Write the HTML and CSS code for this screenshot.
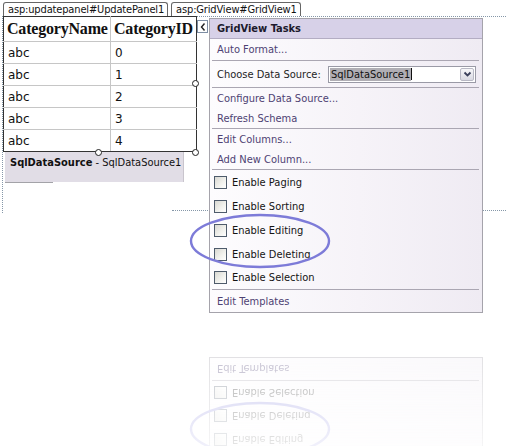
FILE: index.html
```html
<!DOCTYPE html>
<html>
<head>
<meta charset="utf-8">
<link rel="stylesheet" href="styles.css">
</head>
<body>
<div class="page">
  <div class="tabs">
    <span class="tab">asp:updatepanel#UpdatePanel1</span>
    <span class="tab">asp:GridView#GridView1</span>
  </div>
  <div class="updatepanel">
    <div class="gridwrap">
      <table class="grid">
        <colgroup><col class="c1"><col class="c2"></colgroup>
        <tr><th>CategoryName</th><th>CategoryID</th></tr>
        <tr><td>abc</td><td>0</td></tr>
        <tr><td>abc</td><td>1</td></tr>
        <tr><td>abc</td><td>2</td></tr>
        <tr><td>abc</td><td>3</td></tr>
        <tr><td>abc</td><td>4</td></tr>
      </table>
      <span class="handle h-right"></span>
      <span class="handle h-bottom"></span>
      <span class="handle h-corner"></span>
    </div>
    <div class="sqlds"><b>SqlDataSource</b> - SqlDataSource1</div>
    <div class="sqlds-shadow"></div>
  </div>

  <div class="smarttag"><svg width="8" height="10" viewBox="0 0 8 10"><polyline points="5.5,1.5 2.5,5 5.5,8.5" fill="none" stroke="#222" stroke-width="1.4"/></svg></div>

  <div class="tasks">
    <div class="tasks-head">GridView Tasks</div>
    <div class="row link r-auto">Auto Format...</div>
    <div class="sep"></div>
    <div class="row r-choose">
      <span class="lbl">Choose Data Source:</span>
      <div class="select">
        <span class="sel-text">SqlDataSource1</span><span class="caret"></span>
        <span class="sel-btn"><svg width="9" height="7" viewBox="0 0 9 7"><polyline points="1.5,1.5 4.5,4.5 7.5,1.5" fill="none" stroke="#3a3f5a" stroke-width="1.8"/></svg></span>
      </div>
    </div>
    <div class="sep"></div>
    <div class="row link r-20">Configure Data Source...</div>
    <div class="row link r-20">Refresh Schema</div>
    <div class="sep"></div>
    <div class="row link r-20">Edit Columns...</div>
    <div class="row link r-20">Add New Column...</div>
    <div class="sep"></div>
    <div class="row check r-24"><span class="box"></span>Enable Paging</div>
    <div class="row check r-24"><span class="box"></span>Enable Sorting</div>
    <div class="row check r-24"><span class="box"></span>Enable Editing</div>
    <div class="row check r-24"><span class="box"></span>Enable Deleting</div>
    <div class="row check r-23"><span class="box"></span>Enable Selection</div>
    <div class="sep"></div>
    <div class="row link r-last">Edit Templates</div>
  </div>

  <svg class="ellipse" width="144" height="58" viewBox="0 0 144 58"><ellipse cx="72" cy="29" rx="69" ry="26" fill="none" stroke="#7d7bd8" stroke-width="2.4"/></svg>

  <div class="reflection">
    <div class="refl-inner">
      <div class="tasks tasks-copy">
        <div class="row check r-24"><span class="box"></span>Enable Sorting</div>
        <div class="row check r-24"><span class="box"></span>Enable Editing</div>
        <div class="row check r-24"><span class="box"></span>Enable Deleting</div>
        <div class="row check r-23"><span class="box"></span>Enable Selection</div>
        <div class="sep"></div>
        <div class="row link r-last">Edit Templates</div>
      </div>
      <svg class="ellipse-copy" width="144" height="58" viewBox="0 0 144 58"><ellipse cx="72" cy="29" rx="69" ry="26" fill="none" stroke="#7d7bd8" stroke-width="2.4"/></svg>
    </div>
  </div>
</div>
</body>
</html>
```
FILE: styles.css
```css
body {
  margin: 0;
  background: #fff;
  font-family: "DejaVu Sans Condensed", "DejaVu Sans", sans-serif;
  font-size: 11px;
  color: #111;
}

.page {
  position: relative;
  width: 506px;
  height: 446px;
  overflow: hidden;
}

.tabs {
  display: flex;
  gap: 3px;
  padding: 2px 0 0 3px;
  height: 14px;
}

.tab {
  border: 1px solid #666;
  border-bottom: none;
  border-radius: 3px 3px 0 0;
  padding: 0 3px 0 4px;
  height: 13px;
  line-height: 13px;
  background: #fff;
  color: #111;
  letter-spacing: -0.15px;
}

.updatepanel {
  position: relative;
  margin-left: 2px;
  height: 196px;
  border-top: 1px dotted #8597a8;
  border-left: 1px dotted #8597a8;
}

.updatepanel::after {
  content: "";
  position: absolute;
  left: 169px;
  top: 193px;
  width: 340px;
  border-top: 1px dotted #8597a8;
}

.gridwrap {
  position: relative;
  margin-top: -1px;
  width: 193px;
}

.grid {
  border-collapse: collapse;
  table-layout: fixed;
  width: 193px;
  border: 1px solid #333;
  font-family: "DejaVu Sans", sans-serif;
  font-size: 12px;
  color: #111;
}

.grid col.c1 { width: 107px; }
.grid col.c2 { width: 86px; }

.grid th {
  font-family: "Liberation Serif", serif;
  font-size: 16px;
  font-weight: bold;
  text-align: left;
  height: 24px;
  padding: 0 0 0 3px;
  border: 1px solid #c6c6c6;
  white-space: nowrap;
  overflow: hidden;
  letter-spacing: -0.2px;
}

.grid td {
  height: 21px;
  padding: 0 0 0 4px;
  border: 1px solid #c6c6c6;
}

.grid tr:first-child th { border-top-color: #333; }
.grid th:first-child, .grid td:first-child { border-left-color: #333; }
.grid th:last-child, .grid td:last-child { border-right-color: #333; }
.grid tr:last-child td { border-bottom-color: #333; }

.handle {
  position: absolute;
  width: 5px;
  height: 5px;
  border: 1px solid #222;
  border-radius: 50%;
  background: #fff;
}
.h-right { left: 189px; top: 64px; }
.h-bottom { left: 92px; top: 133px; }
.h-corner { left: 189px; top: 133px; }

.sqlds {
  margin-left: 2px;
  width: 173px;
  height: 30px;
  padding-left: 5px;
  line-height: 22px;
  background: #e1dde6;
  border-right: 1px solid #c9c5cd;
  color: #111;
  font-size: 11px;
}

.sqlds b { font-weight: bold; }

.sqlds-shadow {
  margin-left: 2px;
  width: 48px;
  height: 1px;
  background: #a3a3a8;
}

.smarttag {
  position: absolute;
  left: 197px;
  top: 20px;
  width: 9px;
  height: 11px;
  border: 1px solid #7e8ea4;
  background: #fff;
  display: flex;
  align-items: center;
  justify-content: center;
}

.tasks {
  position: absolute;
  left: 209px;
  top: 18px;
  width: 272px;
  border: 1px solid #a5a3ab;
  background: linear-gradient(to right, #fdfcfe 0%, #f6f3f8 55%, #efebf3 100%);
}

.tasks-head {
  height: 19px;
  line-height: 19px;
  padding-left: 7px;
  background: #d7d1e8;
  border-bottom: 1px solid #b3adc3;
  font-weight: bold;
  color: #1c1a2c;
}

.row {
  display: flex;
  align-items: center;
  white-space: nowrap;
}

.link {
  padding-left: 7px;
  color: #4e4273;
}

.r-auto { height: 21px; }
.r-20 { height: 20px; }
.r-24 { height: 24px; }
.r-23 { height: 23px; }
.r-last { height: 22px; }

.r-choose {
  height: 26px;
  padding-left: 7px;
  color: #1e1e24;
}

.lbl { width: 111px; }

.select {
  position: relative;
  display: flex;
  align-items: center;
  width: 148px;
  height: 17px;
  border: 1px solid #9a9aa6;
  background: #fff;
  box-sizing: border-box;
}

.sel-text {
  margin-left: 1px;
  padding: 0 1px;
  height: 13px;
  line-height: 13px;
  background: #b0aeb4;
  color: #111;
}

.caret {
  width: 1px;
  height: 12px;
  background: #111;
}

.sel-btn {
  position: absolute;
  right: 1px;
  top: 1px;
  width: 14px;
  height: 13px;
  border: 1px solid #b8b8c4;
  border-radius: 2px;
  box-sizing: border-box;
  background: linear-gradient(#f7f7f9, #d9d9e2);
  display: flex;
  align-items: center;
  justify-content: center;
}

.sep {
  height: 1px;
  margin: 0 3px 0 2px;
  background: #aaa6b2;
}

.check {
  padding-left: 4px;
  color: #141414;
}

.box {
  width: 11px;
  height: 11px;
  margin-right: 5px;
  border: 1px solid #4e5b6b;
  background: linear-gradient(135deg, #d8d8d2 0%, #f2f2ee 60%, #ffffff 100%);
}

.ellipse {
  position: absolute;
  left: 188px;
  top: 212px;
}

.reflection {
  position: absolute;
  left: 180px;
  top: 357px;
  width: 326px;
  height: 89px;
  opacity: 0.32;
  -webkit-mask-image: linear-gradient(to bottom, rgba(0,0,0,1), rgba(0,0,0,0.35));
  mask-image: linear-gradient(to bottom, rgba(0,0,0,1), rgba(0,0,0,0.35));
}

.refl-inner {
  position: relative;
  height: 89px;
  overflow: hidden;
  transform: scaleY(-1);
}

.tasks-copy {
  top: auto;
  bottom: 0;
  left: 29px;
  border-top: none;
}

.ellipse-copy {
  position: absolute;
  left: 8px;
  top: -12px;
}
```
